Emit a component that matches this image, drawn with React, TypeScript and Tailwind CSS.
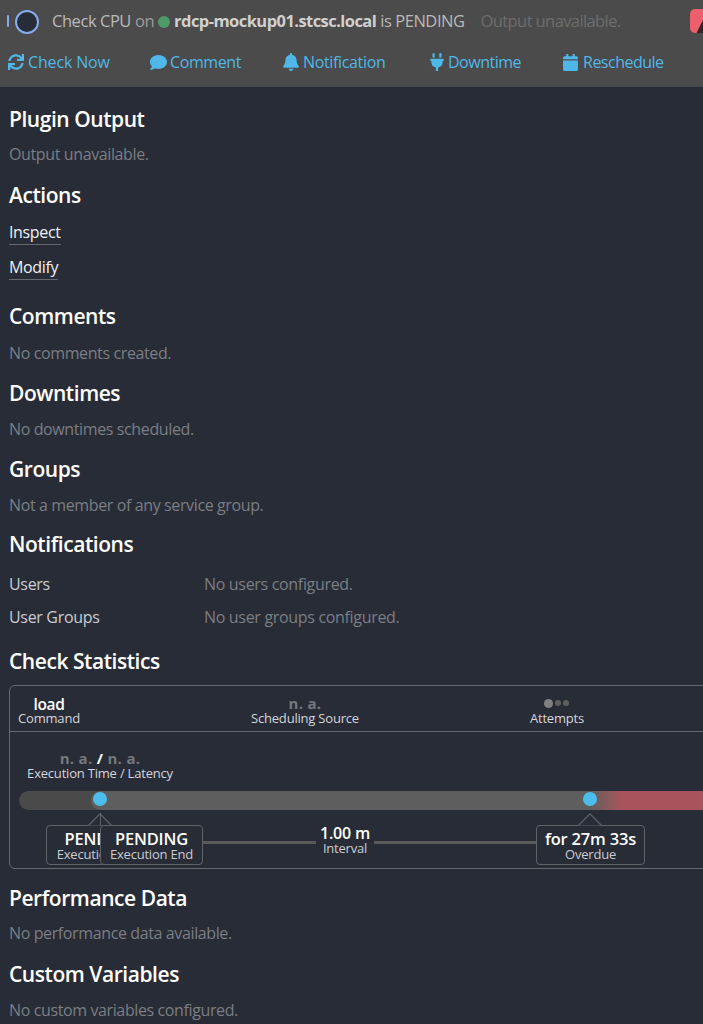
import { FaBell, FaCalendar, FaComment, FaPlug, FaSync } from 'react-icons/fa';

function Heading({ title, className }: { title: string; className: string }) {
    return <h2 className={`h-[30px] pt-[2px] flex items-center text-[21px] font-semibold tracking-[-0.45px] text-white ${className}`}>{title}</h2>;
}

function Muted({ text, className }: { text: string; className: string }) {
    return <p className={`h-6 flex items-center text-[16px] tracking-[-0.38px] text-[#7b7e83] ${className}`}>{text}</p>;
}

function ActionLink({ text, className }: { text: string; className: string }) {
    return (
        <div className={`h-6 flex items-start ${className}`}>
            <a className="mt-[1px] text-[16px] leading-[23px] tracking-[-0.35px] text-[#eef0f3] border-b border-[#66696f]">{text}</a>
        </div>
    );
}

function NotifRow({ label, value, className }: { label: string; value: string; className: string }) {
    return (
        <div className={`h-6 flex items-center text-[16px] tracking-[-0.32px] ${className}`}>
            <span className="w-[195px] text-[#c9ccd2]">{label}</span>
            <span className="text-[#7b7e83]">{value}</span>
        </div>
    );
}

function HeaderLink({ icon, text, className }: { icon: React.ReactNode; text: string; className: string }) {
    return (
        <a className={`flex items-center text-[16px] text-[#4fb8e8] ${className}`}>
            {icon}
            {text}
        </a>
    );
}

function Stat({ className, children, label }: { className: string; children: React.ReactNode; label: string }) {
    return (
        <div className={`flex flex-col items-center ${className}`}>
            <div className="h-[18px] flex items-center">{children}</div>
            <div className="-mt-[1px] text-[13px] leading-[14px] tracking-[-0.2px] text-[#d3d6dc] whitespace-nowrap">{label}</div>
        </div>
    );
}

function Caret({ className }: { className: string }) {
    return (
        <svg className={`absolute ${className}`} width="24" height="13" viewBox="0 0 24 13" fill="none">
            <path d="M0.5 12.5 L12 0.8 L23.5 12.5 Z" fill="#282c37" />
            <path d="M0.5 12.5 L12 0.8 L23.5 12.5" stroke="#5f6267" strokeWidth="1.2" />
        </svg>
    );
}

function Balloon({ title, label, className }: { title: string; label: string; className: string }) {
    return (
        <div className={`absolute top-[139px] h-[40px] bg-[#282c37] border border-[#5f6267] rounded-[4px] flex flex-col items-center overflow-hidden ${className}`}>
            <div className="text-[16.5px] leading-[18px] mt-[4px] font-semibold tracking-[-0.2px] text-white whitespace-nowrap">{title}</div>
            <div className="text-[13px] leading-[12px] tracking-[-0.2px] text-[#c9ccd2] whitespace-nowrap">{label}</div>
        </div>
    );
}

export default function App() {
    return (
        <div className="w-[703px] h-[1024px] overflow-hidden bg-[#282c37] font-['Open_Sans','Noto_Sans',sans-serif]">
            <header className="h-[87px] bg-[#4b4b4b] relative overflow-hidden border-b border-[#45464a]">
                <div className="h-[43px] flex items-center pl-[15px] text-[16.5px] tracking-[-0.45px] text-[#b9b9b9] whitespace-nowrap">
                    <div className="w-[24px] h-[24px] rounded-full bg-[#282c37] border-[2.5px] border-[#86abef] shrink-0"></div>
                    <span className="ml-[13px]">Check CPU</span>
                    <span className="ml-[4px] text-[#9d9d9d]">on</span>
                    <span className="ml-[4px] w-[12px] h-[12px] rounded-full bg-[#4f9a68]"></span>
                    <b className="ml-[4px] font-bold tracking-[-0.56px] text-[#d0d0d0]">rdcp-mockup01.stcsc.local</b>
                    <span className="ml-[4px]">is PENDING</span>
                    <span className="ml-[16px] tracking-[-0.6px] text-[#6d6d6d]">Output unavailable.</span>
                </div>
                <div className="absolute left-[7px] top-[15px] w-[2px] h-[12px] rounded-full bg-[#86abef]"></div>
                <div className="absolute left-[690px] top-[9px] w-[30px] h-[24px] rounded-[5px] bg-[#ec5f6b] overflow-hidden">
                    <svg className="ml-[6px] mt-[11px]" width="14" height="14" viewBox="0 0 14 14">
                        <path d="M7 0 L14 14 L0 14 Z" fill="#33222c" />
                    </svg>
                </div>
                <nav className="h-[38px] flex items-center pl-[8px]">
                    <HeaderLink className="w-[142px] gap-[4px] tracking-[-0.15px]" icon={<FaSync size={16} />} text="Check Now" />
                    <HeaderLink className="w-[132px] gap-[3px] tracking-[-0.4px]" icon={<FaComment size={17} />} text="Comment" />
                    <HeaderLink className="w-[146px] gap-[3px] tracking-[-0.35px]" icon={<FaBell size={18} />} text="Notification" />
                    <HeaderLink className="w-[134px] gap-[2px] tracking-[-0.5px]" icon={<FaPlug size={18} />} text="Downtime" />
                    <HeaderLink className="gap-[4px] tracking-[-0.5px]" icon={<FaCalendar size={17} />} text="Reschedule" />
                </nav>
            </header>
            <main className="pl-[9px] pt-[17px]">
                <Heading title="Plugin Output" className="" />
                <Muted text="Output unavailable." className="mt-[8px]" />
                <Heading title="Actions" className="mt-[14px]" />
                <ActionLink text="Inspect" className="mt-[10px]" />
                <ActionLink text="Modify" className="mt-[11px]" />
                <Heading title="Comments" className="mt-[22px]" />
                <Muted text="No comments created." className="mt-[10px]" />
                <Heading title="Downtimes" className="mt-[13px]" />
                <Muted text="No downtimes scheduled." className="mt-[9px]" />
                <Heading title="Groups" className="mt-[13px]" />
                <Muted text="Not a member of any service group." className="mt-[9px]" />
                <Heading title="Notifications" className="mt-[12px]" />
                <NotifRow label="Users" value="No users configured." className="mt-[13px]" />
                <NotifRow label="User Groups" value="No user groups configured." className="mt-[9px]" />
                <Heading title="Check Statistics" className="mt-[17px]" />
                <section className="mt-[9px] w-[800px] h-[184px] border border-[#66696f] rounded-[6px] relative overflow-hidden">
                    <div className="h-[46px] border-b border-[#66696f] flex items-start pt-[8px]">
                        <Stat className="w-[78px]" label="Command">
                            <span className="mt-[4px] text-[15.5px] font-semibold tracking-[-0.3px] text-white">load</span>
                        </Stat>
                        <Stat className="ml-[137px] w-[160px]" label="Scheduling Source">
                            <span className="text-[15px] font-bold tracking-[0.3px] text-[#75787d]">n. a.</span>
                        </Stat>
                        <Stat className="ml-[122px] w-[100px]" label="Attempts">
                            <div className="flex items-center gap-[2px] mr-[2px]">
                                <span className="w-[9px] h-[9px] rounded-full bg-[#808080]"></span>
                                <span className="w-[6px] h-[6px] rounded-full bg-[#5f5f5f]"></span>
                                <span className="w-[6px] h-[6px] rounded-full bg-[#5f5f5f]"></span>
                            </div>
                        </Stat>
                    </div>
                    <div className="w-[180px] pt-[17px]">
                        <Stat className="w-[180px]" label="Execution Time / Latency">
                            <span className="text-[15px] font-bold tracking-[0.3px] text-[#75787d]">
                                n. a. <span className="text-white">/</span> n. a.
                            </span>
                        </Stat>
                    </div>
                    <div className="ml-[9px] mt-[11px] h-[19px] rounded-l-full flex overflow-hidden">
                        <div className="w-[81px] bg-[#4a4a4a]"></div>
                        <div className="w-[499px] -ml-[9px] rounded-l-[10px] bg-[#5e5e5e]"></div>
                        <div className="w-[32px] bg-gradient-to-r from-[#5e5e5e] to-[#a9545c]"></div>
                        <div className="flex-1 bg-[#a9545c]"></div>
                    </div>
                    <div className="absolute left-[83px] top-[106px] w-[14px] h-[14px] rounded-full bg-[#4dbdec]"></div>
                    <div className="absolute left-[573px] top-[106px] w-[14px] h-[14px] rounded-full bg-[#4dbdec]"></div>
                    <div className="absolute left-[192px] top-[155px] w-[114px] h-[3px] bg-[#5a5a5a]"></div>
                    <div className="absolute left-[364px] top-[155px] w-[163px] h-[3px] bg-[#5a5a5a]"></div>
                    <div className="absolute left-[290px] top-[138px] w-[90px] flex flex-col items-center">
                        <div className="text-[16px] leading-[18px] font-semibold tracking-[-0.2px] text-white">1.00 m</div>
                        <div className="text-[13px] leading-[13px] tracking-[-0.2px] text-[#c9ccd2]">Interval</div>
                    </div>
                    <Balloon title="PENDING" label="Execution Start" className="left-[36px] w-[110px]" />
                    <Caret className="left-[78px] top-[127px]" />
                    <Balloon title="PENDING" label="Execution End" className="left-[90px] w-[103px]" />
                    <div className="absolute left-[90px] top-[127px] w-px h-[13px] bg-[#5f6267]"></div>
                    <Balloon title="for 27m 33s" label="Overdue" className="left-[526px] w-[109px]" />
                    <Caret className="left-[568px] top-[127px]" />
                </section>
                <Heading title="Performance Data" className="mt-[14px]" />
                <Muted text="No performance data available." className="mt-[8px]" />
                <Heading title="Custom Variables" className="mt-[14px]" />
                <Muted text="No custom variables configured." className="mt-[9px]" />
            </main>
        </div>
    );
}
